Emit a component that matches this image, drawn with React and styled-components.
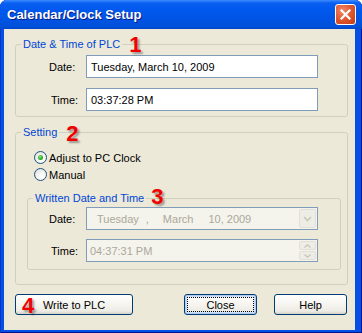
import React from "react";
import styled, { createGlobalStyle } from "styled-components";

const Global = createGlobalStyle`
  html, body { margin: 0; padding: 0; background: #ffffff; }
  #root { width: 362px; height: 333px; }
`;

const Window = styled.div`
  width: 362px;
  height: 333px;
  display: flex;
  flex-direction: column;
  background: #0550e4;
  border-radius: 7px 7px 0 0;
  overflow: hidden;
  font-family: "Liberation Sans", Arial, sans-serif;
  font-size: 11px;
  color: #000;
  box-sizing: border-box;
  box-shadow: inset 1px 0 0 #0a33c8, inset -1px 0 0 #00138c, inset 0 -1px 0 #00138c;
`;

const TitleBar = styled.div`
  height: 29px;
  flex: none;
  display: flex;
  align-items: center;
  justify-content: space-between;
  padding: 0 6px 0 7px;
  background: linear-gradient(
    to bottom,
    #3d8dff 0px,
    #0a5ff0 3px,
    #0058ee 10px,
    #0054e3 20px,
    #0050d8 27px,
    #0044c8 29px
  );
`;

const Title = styled.span`
  font-family: "Liberation Sans", Arial, sans-serif;
  font-weight: bold;
  font-size: 13px;
  color: #ffffff;
  text-shadow: 1px 1px 0 #0a1883;
`;

const CloseBox = styled.div`
  width: 19px;
  height: 19px;
  border: 1px solid #ffffff;
  border-radius: 3px;
  background: radial-gradient(circle at 35% 30%, #f08a6c 0%, #e25a34 45%, #c33a14 100%);
  display: flex;
  align-items: center;
  justify-content: center;
`;

const Body = styled.div`
  flex: 1;
  margin: 0 7px 3px 4px;
  background: #ece9d8;
  display: flex;
  flex-direction: column;
  padding: 8px 7px 0 11px;
`;

const Group = styled.fieldset`
  margin: 0 0 ${(p) => p.$mb || 0}px ${(p) => p.$ml || 0}px;
  padding: ${(p) => p.$pad};
  border: 1px solid #d0d0bf;
  border-radius: 3px;
  min-inline-size: 0;
`;

const Legend = styled.legend`
  position: relative;
  margin-left: 5px;
  padding: 0 2px;
  line-height: 14px;
  font-size: 11px;
  color: #0046d5;
`;

const Marker = styled.span`
  position: absolute;
  left: ${(p) => p.$left};
  top: ${(p) => p.$top}px;
  font-family: "Liberation Sans", Arial, sans-serif;
  font-weight: bold;
  font-size: 22px;
  line-height: 22px;
  color: #f00000;
  text-shadow: 2px 2px 2px rgba(0, 0, 0, 0.35);
  pointer-events: none;
`;

const FieldGrid = styled.div`
  display: grid;
  grid-template-columns: 37px 232px;
  row-gap: ${(p) => p.$gap}px;
  align-items: center;
  margin-left: ${(p) => p.$indent}px;
`;

const Label = styled.span`
  padding-left: ${(p) => p.$shift || 0}px;
`;

const Field = styled.div`
  height: 23px;
  box-sizing: border-box;
  border: 1px solid #7f9db9;
  background: ${(p) => (p.$disabled ? "#f4f3ec" : "#ffffff")};
  color: ${(p) => (p.$disabled ? "#aca899" : "#000")};
  display: flex;
  align-items: center;
  padding: 0 1px 0 ${(p) => p.$pl}px;
  white-space: nowrap;
`;

const FieldText = styled.span`
  flex: 1;
  display: flex;
`;

const Segment = styled.span`
  margin-left: ${(p) => p.$gap || 0}px;
`;

const DropButton = styled.div`
  width: 17px;
  height: 19px;
  box-sizing: border-box;
  border: 1px solid #e2e0d6;
  border-radius: 2px;
  background: #eeede5;
  display: flex;
  align-items: center;
  justify-content: center;
`;

const Spinner = styled.div`
  width: 17px;
  height: 19px;
  display: flex;
  flex-direction: column;
  gap: 1px;
`;

const SpinHalf = styled.div`
  flex: 1;
  box-sizing: border-box;
  border: 1px solid #e2e0d6;
  border-radius: 2px;
  background: #eeede5;
  display: flex;
  align-items: center;
  justify-content: center;
`;

const Radios = styled.div`
  display: flex;
  flex-direction: column;
  margin: 0 0 8px 18px;
`;

const RadioRow = styled.label`
  height: 17px;
  display: flex;
  align-items: center;
  gap: 2px;
`;

const RadioCircle = styled.span`
  width: 13px;
  height: 13px;
  box-sizing: border-box;
  border-radius: 50%;
  border: 1px solid #1c5180;
  background: radial-gradient(circle at 65% 70%, #ffffff 0%, #f4f4f0 40%, #dcdcd7 100%);
  display: flex;
  align-items: center;
  justify-content: center;
`;

const RadioDot = styled.span`
  width: 5px;
  height: 5px;
  border-radius: 50%;
  background: radial-gradient(circle at 40% 35%, #8ee27a 0%, #27a827 60%, #168016 100%);
`;

const Footer = styled.div`
  display: flex;
  align-items: center;
  margin-top: 9px;
`;

const Button = styled.button`
  position: relative;
  width: ${(p) => p.$w}px;
  height: 21px;
  margin: 0 0 0 ${(p) => p.$ml || 0}px;
  padding: 0;
  box-sizing: border-box;
  border: 1px solid #003c74;
  border-radius: 3px;
  background: linear-gradient(to bottom, #ffffff 0%, #f5f4ef 50%, #ecebe4 85%, #d6d0c5 100%);
  font-family: "Liberation Sans", Arial, sans-serif;
  font-size: 11px;
  color: #000;
  box-shadow: ${(p) => (p.$default ? "inset 0 0 0 1px #b4cbf1, inset 0 0 0 2px #cee0fb" : "none")};
  outline: ${(p) => (p.$default ? "1px dotted #000" : "none")};
  outline-offset: -4px;
`;

const ButtonMarker = styled(Marker)`
  left: 6px;
`;

const Chevron = () => (
  <svg width="9" height="6" viewBox="0 0 9 6">
    <path d="M1 1 L4.5 4.5 L8 1" fill="none" stroke="#c9c7ba" strokeWidth="1.6" />
  </svg>
);

const SmallChevron = ({ up }) => (
  <svg width="7" height="4" viewBox="0 0 7 4">
    <path
      d={up ? "M0.5 3.5 L3.5 0.8 L6.5 3.5" : "M0.5 0.5 L3.5 3.2 L6.5 0.5"}
      fill="none"
      stroke="#c9c7ba"
      strokeWidth="1.3"
    />
  </svg>
);

const Radio = ({ checked, children }) => (
  <RadioRow>
    <RadioCircle>{checked && <RadioDot />}</RadioCircle>
    <span>{children}</span>
  </RadioRow>
);

export default function App() {
  return (
    <>
      <Global />
      <Window>
        <TitleBar>
          <Title>Calendar/Clock Setup</Title>
          <CloseBox>
            <svg width="11" height="11" viewBox="0 0 11 11">
              <path d="M1.5 1.5 L9.5 9.5 M9.5 1.5 L1.5 9.5" stroke="#ffffff" strokeWidth="2.2" strokeLinecap="square" />
            </svg>
          </CloseBox>
        </TitleBar>
        <Body>
          <Group $pad="4px 0 5px 0" $mb={8}>
            <Legend>
              Date &amp; Time of PLC
              <Marker $left="calc(100% + 7px)" $top={-3}>1</Marker>
            </Legend>
            <FieldGrid $gap={10} $indent={33}>
              <Label>Date:</Label>
              <Field $pl={4}>Tuesday, March 10, 2009</Field>
              <Label $shift={2}>Time:</Label>
              <Field $pl={4}>03:37:28 PM</Field>
            </FieldGrid>
          </Group>
          <Group $pad="10px 6px 14px 0">
            <Legend>
              Setting
              <Marker $left="calc(100% + 7px)" $top={-2}>2</Marker>
            </Legend>
            <Radios>
              <Radio checked>Adjust to PC Clock</Radio>
              <Radio>Manual</Radio>
            </Radios>
            <Group $pad="2px 0 7px 0" $ml={11}>
              <Legend>
                Written Date and Time
                <Marker $left="calc(100% + 5px)" $top={-5}>3</Marker>
              </Legend>
              <FieldGrid $gap={9} $indent={21}>
                <Label>Date:</Label>
                <Field $disabled $pl={10}>
                  <FieldText>
                    <Segment>Tuesday</Segment>
                    <Segment $gap={7}>,</Segment>
                    <Segment $gap={14}>March</Segment>
                    <Segment $gap={15}>10, 2009</Segment>
                  </FieldText>
                  <DropButton>
                    <Chevron />
                  </DropButton>
                </Field>
                <Label $shift={2}>Time:</Label>
                <Field $disabled $pl={3}>
                  <FieldText>04:37:31 PM</FieldText>
                  <Spinner>
                    <SpinHalf>
                      <SmallChevron up />
                    </SpinHalf>
                    <SpinHalf>
                      <SmallChevron />
                    </SpinHalf>
                  </Spinner>
                </Field>
              </FieldGrid>
            </Group>
          </Group>
          <Footer>
            <Button $w={118}>
              <ButtonMarker $top={0}>4</ButtonMarker>
              Write to PLC
            </Button>
            <Button $w={73} $ml={51} $default>
              Close
            </Button>
            <Button $w={73} $ml={17}>
              Help
            </Button>
          </Footer>
        </Body>
      </Window>
    </>
  );
}
